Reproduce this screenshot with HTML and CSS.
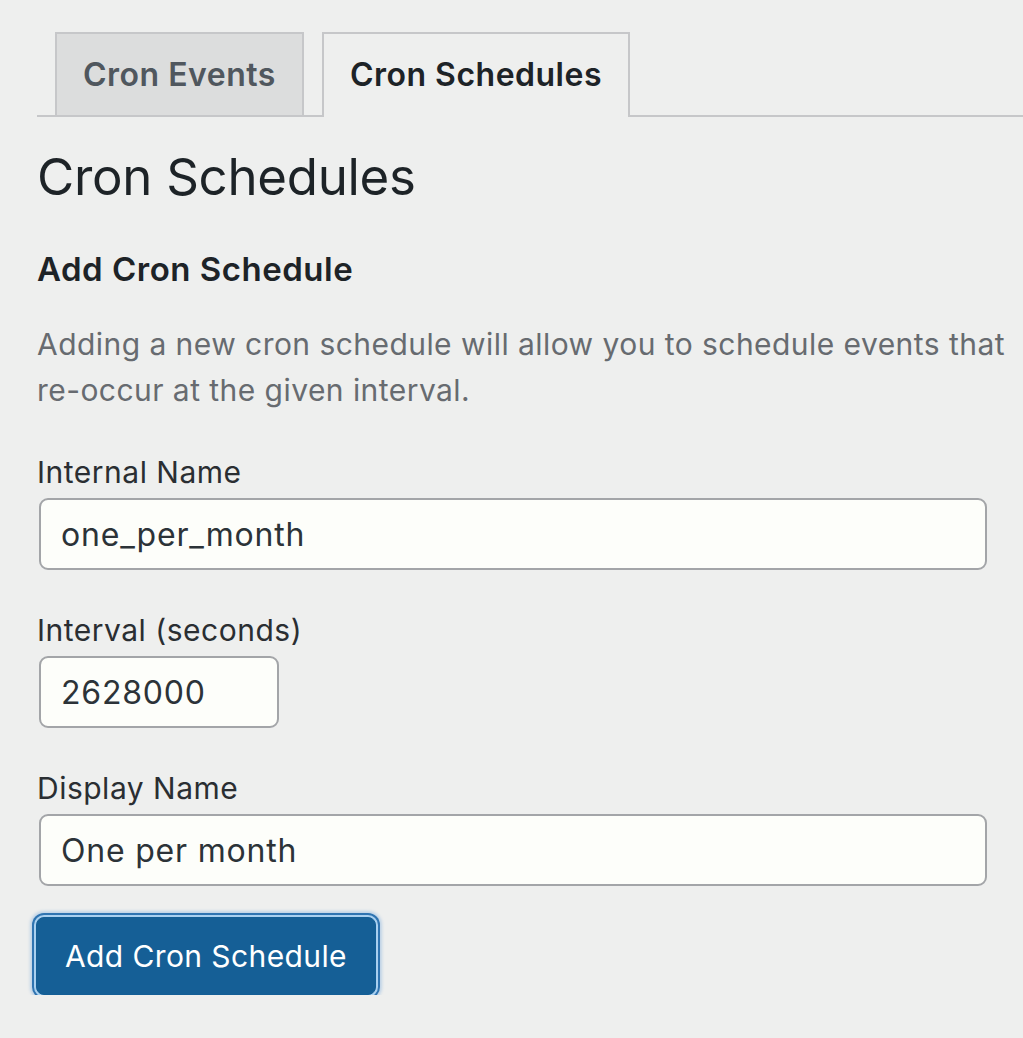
FILE: index.html
```html
<!DOCTYPE html>
<html lang="en">
<head>
<meta charset="utf-8">
<title>Cron Schedules</title>
<link rel="stylesheet" href="styles.css">
</head>
<body>
<div class="wrap">
  <nav class="nav-tabs">
    <a class="nav-tab" href="#">Cron Events</a>
    <a class="nav-tab nav-tab-active" href="#">Cron Schedules</a>
  </nav>
  <h1 class="page-title">Cron Schedules</h1>
  <h3 class="section-title">Add Cron Schedule</h3>
  <p class="description">Adding a new cron schedule will allow you to schedule events that re-occur at the given interval.</p>
  <form class="schedule-form">
    <div class="field">
      <label class="field-label" for="name">Internal Name</label>
      <input class="text-input wide" id="name" type="text" value="one_per_month">
    </div>
    <div class="field">
      <label class="field-label" for="interval">Interval (seconds)</label>
      <input class="text-input short" id="interval" type="text" value="2628000">
    </div>
    <div class="field">
      <label class="field-label" for="display">Display Name</label>
      <input class="text-input wide" id="display" type="text" value="One per month">
    </div>
    <button class="primary-button" type="button">Add Cron Schedule</button>
  </form>
</div>
</body>
</html>
```

FILE: styles.css
```css
html, body {
  margin: 0;
  padding: 0;
}

body {
  background: #eeefee;
  font-family: Inter, "Noto Sans", "Liberation Sans", sans-serif;
  color: #1d2327;
}

.wrap {
  padding: 32px 0 0 37px;
}

.nav-tabs {
  display: flex;
  gap: 18px;
  padding-left: 18px;
  border-bottom: 2px solid #c6c7c9;
}

.nav-tab {
  display: block;
  height: 81px;
  line-height: 81px;
  padding: 0 26px;
  margin-bottom: -2px;
  border: 2px solid #c6c7c9;
  border-bottom: none;
  background: #dcdddd;
  color: #50575e;
  font-size: 32px;
  font-weight: 600;
  letter-spacing: 0.5px;
  text-decoration: none;
  white-space: nowrap;
}

.nav-tab-active {
  background: #eeefee;
  color: #1d2327;
  height: 83px;
}

.page-title {
  margin: 26px 0 0;
  font-size: 51px;
  line-height: 68px;
  font-weight: 400;
  color: #1d2327;
  letter-spacing: -0.3px;
}

.section-title {
  margin: 36px 0 0;
  font-size: 33px;
  line-height: 45px;
  font-weight: 600;
  letter-spacing: 0.5px;
  color: #1d2327;
}

.description {
  margin: 29px 0 0;
  font-size: 30px;
  line-height: 46px;
  letter-spacing: 0.45px;
  color: #676b70;
  max-width: 986px;
}

.schedule-form {
  margin: 36px 0 0;
}

.field {
  margin-bottom: 37px;
}

.field-label {
  display: block;
  font-size: 30px;
  line-height: 46px;
  letter-spacing: 0.5px;
  margin-bottom: 3px;
  color: #2a2e32;
}

.text-input {
  display: block;
  box-sizing: border-box;
  height: 72px;
  margin-left: 2px;
  padding: 0 20px;
  border: 2px solid #a3a5a8;
  border-radius: 9px;
  background: #fdfefa;
  font-family: Inter, "Noto Sans", "Liberation Sans", sans-serif;
  font-size: 32px;
  letter-spacing: 0.8px;
  color: #2c3338;
  outline: none;
}

.text-input.wide {
  width: 948px;
}

.text-input.short {
  width: 240px;
}

.field:last-of-type {
  margin-bottom: 31px;
}

.primary-button {
  display: block;
  box-sizing: border-box;
  margin-left: -1px;
  height: 78px;
  padding: 0 28px;
  border: 1px solid #135e96;
  border-radius: 8px;
  background: #155f96;
  color: #ffffff;
  font-family: Inter, "Noto Sans", "Liberation Sans", sans-serif;
  font-size: 30px;
  font-weight: 400;
  letter-spacing: 0.4px;
  box-shadow: 0 0 0 2px #a9d0f0, 0 0 0 4px #2f74b1, 0 0 3px 6px rgba(120, 170, 220, 0.4);
  cursor: pointer;
}
```
